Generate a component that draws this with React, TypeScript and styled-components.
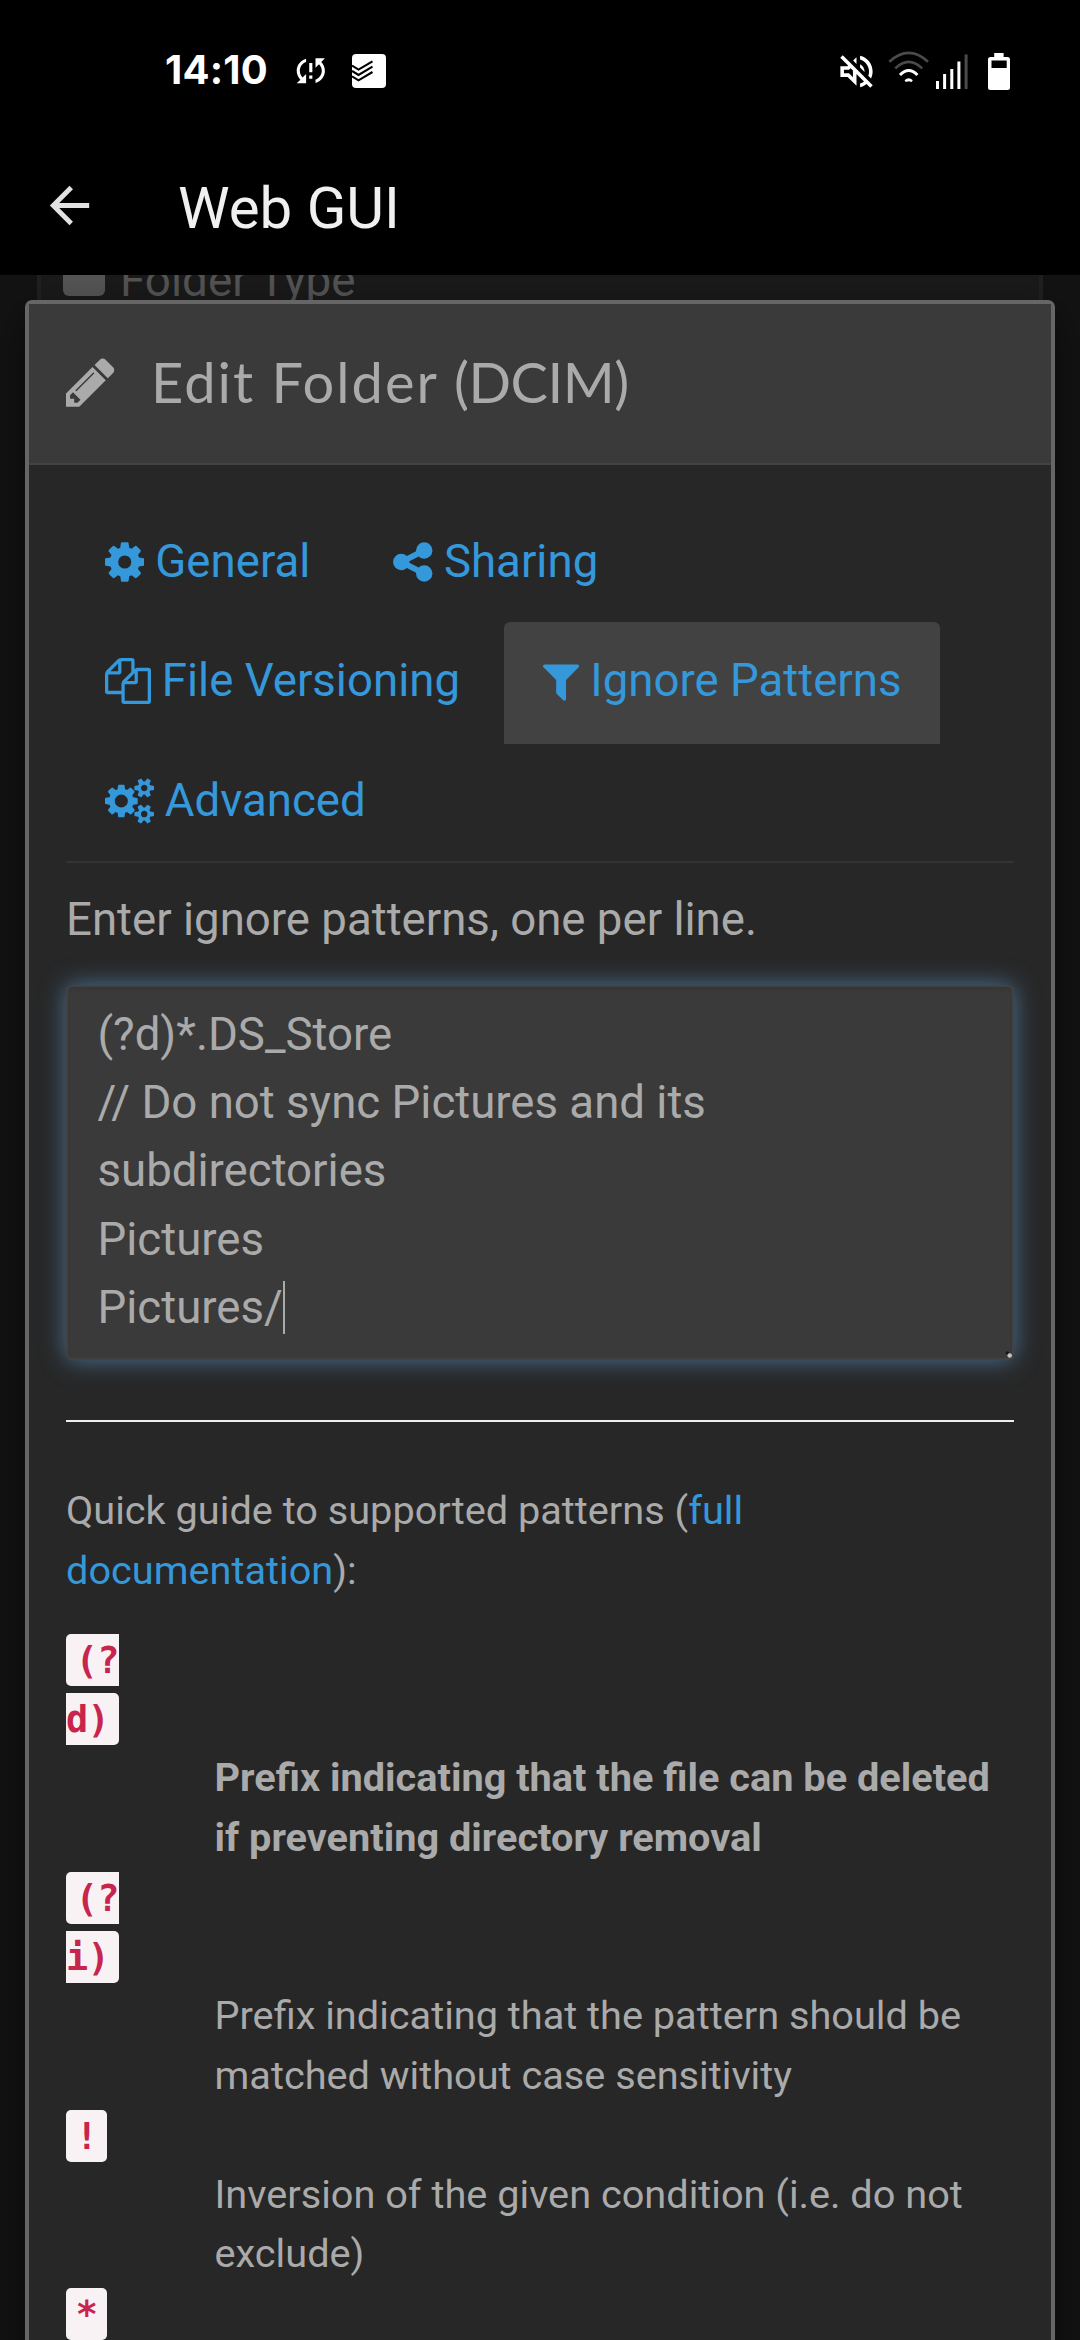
import React from 'react';
import styled, { createGlobalStyle, css } from 'styled-components';

const GlobalStyle = createGlobalStyle`
  *, *::before, *::after { box-sizing: border-box; }
  html, body { margin: 0; padding: 0; background: #000; }
  body { width: 1080px; height: 2340px; overflow: hidden; font-family: Roboto, sans-serif; }
`;

const Screen = styled.div`
  display: flex;
  flex-direction: column;
  width: 1080px;
  height: 2340px;
  overflow: hidden;
  background: #000;
  color: #aaa;
  font-family: Roboto, sans-serif;
`;

/* ---------- status bar ---------- */

const StatusBar = styled.div`
  display: flex;
  align-items: center;
  flex: none;
  height: 142px;
  padding: 0 70px 0 165px;
  color: #fff;
`;

const Clock = styled.span`
  width: 127px;
  padding-bottom: 2px;
  font: 700 40px/48px Inter, sans-serif;
  letter-spacing: 0.2px;
  white-space: nowrap;
`;

const StatusGroup = styled.div<{ $end?: boolean }>`
  display: flex;
  align-items: center;
  ${(p) => p.$end && css`margin-left: auto;`}
`;

const Glyph = styled.svg<{ $w: number; $h?: number; $gap?: number }>`
  display: block;
  flex: none;
  width: ${(p) => p.$w}px;
  height: ${(p) => p.$h ?? p.$w}px;
  margin-left: ${(p) => p.$gap ?? 0}px;
  fill: currentColor;
`;

const WifiGlyph = styled(Glyph)`
  margin-bottom: 1px;
`;

/* ---------- app bar ---------- */

const AppBar = styled.header`
  display: flex;
  align-items: center;
  flex: none;
  height: 133px;
  padding: 0 40px 7px;
`;

const BackIcon = styled(Glyph)`
  color: #e2e2e2;
`;

const AppTitle = styled.h1`
  margin: 0 0 0 79px;
  padding-top: 6px;
  font-weight: 400;
  font-size: 58.2px;
  line-height: 66px;
  color: #f0f0f0;
  white-space: nowrap;
`;

/* ---------- web view ---------- */

const WebView = styled.main`
  position: relative;
  flex: 1;
  overflow: hidden;
  background: #131313;
`;

const Underlay = styled.div`
  position: absolute;
  inset: 0 37px;
  overflow: hidden;
  border: solid #202020;
  border-width: 0 4px;
  background: #1a1a1a;
`;

const UnderlayRow = styled.div`
  display: flex;
  align-items: center;
  height: 68px;
  margin-top: -28px;
  padding-left: 22px;
  color: #545454;
  font-size: 45.8px;
  line-height: 68px;
  white-space: nowrap;
`;

const FolderBlock = styled.span`
  width: 42px;
  height: 36px;
  margin: -6px 15px 0 0;
  border-radius: 6px;
  background: #555;
`;

const Modal = styled.section`
  position: relative;
  height: 2100px;
  margin: 25px 25px 0;
  border: 4px solid #666;
  border-radius: 7px;
  background: #272727;
  box-shadow: 0 14px 42px rgba(0, 0, 0, 0.5);
`;

const ModalHeader = styled.div`
  display: flex;
  align-items: center;
  height: 161px;
  padding: 0 37px;
  border-bottom: 2px solid #434343;
  background: #3a3a3a;
`;

const ModalTitle = styled.h2`
  margin: 0 0 0 32px;
  padding-bottom: 4px;
  font: 400 56px/68px Lato, sans-serif;
  letter-spacing: 2px;
  color: #aaa;
  white-space: nowrap;
`;

const FolderName = styled.span`
  letter-spacing: -0.5px;
`;

const ModalBody = styled.div`
  padding: 37px 37px 0;
`;

const Tabs = styled.nav`
  display: flex;
  flex-wrap: wrap;
  column-gap: 5.5px;
  height: 361px;
  align-content: flex-start;
  border-bottom: 2px solid #333;
`;

const Tab = styled.a<{ $active?: boolean }>`
  display: flex;
  align-items: center;
  height: 122px;
  margin-bottom: -2.3px;
  padding: 0 38.8px 2.6px;
  border-radius: 6px 6px 0 0;
  background: ${(p) => (p.$active ? '#424242' : 'transparent')};
  color: #3498db;
  font-size: 45.6px;
  line-height: 68px;
  white-space: nowrap;
`;

const TabIcon = styled(Glyph)`
  margin-right: 11px;
`;

const Lead = styled.p`
  margin: 23px 0 0;
  font-size: 45.6px;
  line-height: 68px;
`;

const PatternBox = styled.div`
  position: relative;
  height: 375px;
  margin-top: 31px;
  padding: 14px 29.5px;
  border: 2px solid #424242;
  border-radius: 6px;
  background: #3a3a3a;
  box-shadow: inset 0 3px 3px rgba(0, 0, 0, 0.075), 0 0 24px rgba(94, 156, 208, 0.66);
  font-size: 45.6px;
  line-height: 68.2px;
`;

const PatternLine = styled.div`
  display: flex;
  align-items: center;
  height: 68.2px;
  white-space: nowrap;
`;

const Caret = styled.span`
  width: 2px;
  height: 53px;
  background: #aaa;
`;

const Grip = styled(Glyph)`
  position: absolute;
  right: -1px;
  bottom: -1px;
`;

const Divider = styled.hr`
  height: 2px;
  margin: 60px 0 59px;
  border: 0;
  background: #ecf0f1;
`;

const Guide = styled.p`
  margin: 0 0 29.4px;
  font-size: 39.7px;
  line-height: 59.5px;
`;

const DocLink = styled.a`
  color: #3498db;
`;

const PatternList = styled.dl`
  margin: 0;
  font-size: 39.7px;
  line-height: 59.5px;
`;

const Term = styled.dt`
  width: 60px;
`;

const Code = styled.code`
  padding: 4.5px 9.7px;
  border-radius: 5px;
  background: #f9f2f4;
  color: #c7254e;
  font-family: 'DejaVu Sans Mono', monospace;
  font-size: 36.8px;
  font-weight: 700;
  line-height: 1;
  letter-spacing: -0.6px;
`;

const Meaning = styled.dd<{ $strong?: boolean }>`
  margin: 0 0 0 148.5px;
  font-weight: ${(p) => (p.$strong ? 700 : 400)};
  white-space: nowrap;
`;

const icons = {
  pencil:
    'M491 1536l91-91-235-235-91 91v107h128v128h107zm523-928q0-22-22-22-10 0-17 7l-542 542q-7 7-7 17 0 22 22 22 10 0 17-7l542-542q7-7 7-17zm-54-192l416 416-832 832h-416v-416zm683 96q0 53-37 90l-166 166-416-416 166-165q36-38 90-38 53 0 91 38l235 234q37 39 37 91z',
  cog:
    'M1152 896q0-106-75-181t-181-75-181 75-75 181 75 181 181 75 181-75 75-181zm512-109v222q0 12-8 23t-20 13l-185 28q-19 54-39 91 35 50 107 138 10 12 10 25t-9 23q-27 37-99 108t-94 71q-12 0-26-9l-138-108q-44 23-91 38-16 136-29 186-7 28-36 28h-222q-14 0-24.5-8.5t-11.5-21.5l-28-184q-49-16-90-37l-141 107q-10 9-25 9-14 0-25-11-126-114-165-168-7-10-7-23 0-12 8-23 15-21 51-66.5t54-70.5q-27-50-41-99l-183-27q-13-2-21-12.5t-8-23.5v-222q0-12 8-23t19-13l186-28q14-46 39-92-40-57-107-138-10-12-10-24 0-10 9-23 26-36 98.5-107.5t94.5-71.5q13 0 26 10l138 107q44-23 91-38 16-136 29-186 7-28 36-28h222q14 0 24.5 8.5t11.5 21.5l28 184q49 16 90 37l142-107q9-9 24-9 13 0 25 10 129 119 165 170 7 8 7 22 0 12-8 23-15 21-51 66.5t-54 70.5q26 50 41 98l183 28q13 2 21 12.5t8 23.5z',
  share:
    'M1344 1024q133 0 226.5 93.5t93.5 226.5-93.5 226.5-226.5 93.5-226.5-93.5-93.5-226.5q0-12 2-34l-360-180q-92 86-218 86-133 0-226.5-93.5t-93.5-226.5 93.5-226.5 226.5-93.5q126 0 218 86l360-180q-2-22-2-34 0-133 93.5-226.5t226.5-93.5 226.5 93.5 93.5 226.5-93.5 226.5-226.5 93.5q-126 0-218-86l-360 180q2 22 2 34t-2 34l360 180q92-86 218-86z',
  files:
    'M1696 384q40 0 68 28t28 68v1216q0 40-28 68t-68 28h-960q-40 0-68-28t-28-68v-288h-544q-40 0-68-28t-28-68v-672q0-40 20-88t48-76l408-408q28-28 76-48t88-20h416q40 0 68 28t28 68v328q68-40 128-40h416zm-544 213l-299 299h299v-299zm-640-384l-299 299h299v-299zm196 647l316-316v-416h-384v416q0 40-28 68t-68 28h-416v640h512v-256q0-40 20-88t48-76zm956 804v-1152h-384v416q0 40-28 68t-68 28h-416v640h896z',
  filter:
    'M1595 295q17 41-14 70l-493 493v742q0 42-39 59-13 5-25 5-27 0-45-19l-256-256q-19-19-19-45v-486l-493-493q-31-29-14-70 17-39 59-39h1280q42 0 59 39z',
  cogs:
    'M832 896q0-106-75-181t-181-75-181 75-75 181 75 181 181 75 181-75 75-181zm768 512q0-52-38-90t-90-38-90 38-38 90q0 53 37.5 90.5t90.5 37.5 90.5-37.5 37.5-90.5zm0-1024q0-52-38-90t-90-38-90 38-38 90q0 53 37.5 90.5t90.5 37.5 90.5-37.5 37.5-90.5zm-384 421v185q0 10-7 19.5t-16 10.5l-155 24q-11 35-32 76 34 48 90 115 7 11 7 20 0 12-7 19-23 30-82.5 89.5t-78.5 59.5q-11 0-21-7l-115-90q-37 19-77 31-11 108-23 155-7 24-30 24h-186q-11 0-20-7.5t-10-17.5l-23-153q-34-10-75-31l-118 89q-7 7-20 7-11 0-21-8-144-133-144-160 0-9 7-19 10-14 41-53t47-61q-23-44-35-82l-152-24q-10-1-17-9.5t-7-19.5v-185q0-10 7-19.5t16-10.5l155-24q11-35 32-76-34-48-90-115-7-11-7-20 0-12 7-20 22-30 82-89t79-59q11 0 21 7l115 90q34-18 77-32 11-108 23-154 7-24 30-24h186q11 0 20 7.5t10 17.5l23 153q34 10 75 31l118-89q8-7 20-7 11 0 21 8 144 133 144 160 0 8-7 19-12 16-42 54t-45 60q23 48 34 82l152 23q10 2 17 10.5t7 19.5zm640 533v140q0 16-149 31-12 27-30 52 51 113 51 138 0 4-4 7-122 71-124 71-8 0-46-47t-52-68q-20 2-30 2t-30-2q-14 21-52 68t-46 47q-2 0-124-71-4-3-4-7 0-25 51-138-18-25-30-52-149-15-149-31v-140q0-16 149-31 13-29 30-52-51-113-51-138 0-4 4-7 4-2 35-20t59-34 30-16q8 0 46 46.5t52 67.5q20-2 30-2t30 2q51-71 92-112l6-2q4 0 124 70 4 3 4 7 0 25-51 138 17 23 30 52 149 15 149 31zm0-1024v140q0 16-149 31-12 27-30 52 51 113 51 138 0 4-4 7-122 71-124 71-8 0-46-47t-52-68q-20 2-30 2t-30-2q-14 21-52 68t-46 47q-2 0-124-71-4-3-4-7 0-25 51-138-18-25-30-52-149-15-149-31v-140q0-16 149-31 13-29 30-52-51-113-51-138 0-4 4-7 4-2 35-20t59-34 30-16q8 0 46 46.5t52 67.5q20-2 30-2t30 2q51-71 92-112l6-2q4 0 124 70 4 3 4 7 0 25-51 138 17 23 30 52 149 15 149 31z',
  syncProblem:
    'M3 12c0 2.21.91 4.2 2.36 5.64L3 20h6v-6l-2.24 2.24C5.68 15.15 5 13.66 5 12c0-2.61 1.67-4.83 4-5.65V4.26C5.55 5.15 3 8.27 3 12zm8 5h2v-2h-2v2zM21 4h-6v6l2.24-2.24C18.32 8.85 19 10.34 19 12c0 2.61-1.67 4.83-4 5.65v2.09c3.45-.89 6-4.01 6-7.74 0-2.21-.91-4.2-2.36-5.64L21 4zm-10 9h2V7h-2v6z',
  volumeOff:
    'M4.34 2.93L2.93 4.34 7.29 8.7 7 9H3v6h4l5 5v-6.59l4.18 4.18c-.65.49-1.38.88-2.18 1.11v2.06c1.34-.3 2.57-.92 3.61-1.75l2.05 2.05 1.41-1.41L4.34 2.93zM10 15.17L7.83 13H5v-2h2.83l.88-.88L10 11.41v3.76zM19 12c0 .82-.15 1.61-.41 2.34l1.53 1.53c.56-1.17.88-2.48.88-3.87 0-4.28-2.99-7.86-7-8.77v2.06c2.89.86 5 3.54 5 6.71zm-7-8l-1.88 1.88L12 7.76zm4.5 8c0-1.77-1.02-3.29-2.5-4.03v1.79l2.48 2.48c.01-.08.02-.16.02-.24z',
  arrowBack: 'M20 11H7.83l5.59-5.59L12 4l-8 8 8 8 1.41-1.41L7.83 13H20v-2z',
};

const tabs = [
  { label: 'General', path: icons.cog, width: 39.5, box: '128 0 1536 1792' },
  { label: 'Sharing', path: icons.share, width: 39.5, box: '128 0 1536 1792' },
  { label: 'File Versioning', path: icons.files, width: 46, box: '0 0 1792 1792' },
  { label: 'Ignore Patterns', path: icons.filter, width: 36.2, box: '192 0 1408 1792', active: true },
  { label: 'Advanced', path: icons.cogs, width: 49, box: '-64 0 1920 1792' },
];

const patternText = [
  '(?d)*.DS_Store',
  '// Do not sync Pictures and its',
  'subdirectories',
  'Pictures',
  'Pictures/',
];

const guide = [
  {
    code: '(?d)',
    strong: true,
    lines: ['Prefix indicating that the file can be deleted', 'if preventing directory removal'],
  },
  {
    code: '(?i)',
    lines: ['Prefix indicating that the pattern should be', 'matched without case sensitivity'],
  },
  { code: '!', lines: ['Inversion of the given condition (i.e. do not', 'exclude)'] },
  { code: '*', lines: [] },
];

function SystemStatus() {
  return (
    <StatusBar>
      <Clock>14:10</Clock>
      <StatusGroup>
        <Glyph $w={37.6} viewBox="0 0 24 24">
          <path d={icons.syncProblem} />
        </Glyph>
        <Glyph $w={34} $gap={22} viewBox="0 0 34 34">
          <rect width="34" height="34" rx="4" />
          <path
            d="M0 11.6L6.5 15.6 20.5 7.3M0 16.9L6.5 20.9 20.5 12.6M0 22.3L6.5 26.3 20.5 18"
            fill="none"
            stroke="#000"
            strokeWidth="2.1"
          />
        </Glyph>
      </StatusGroup>
      <StatusGroup $end>
        <Glyph $w={43} viewBox="0 0 24 24">
          <path d={icons.volumeOff} />
        </Glyph>
        <WifiGlyph $w={42} $h={42} $gap={10} viewBox="0 0 42 42">
          <g fill="none" strokeWidth="2.6">
            <path d="M1.3 11.8Q20.7-6 40 11.8M7.2 18.4Q20.7 5.4 34.2 18.4" stroke="#4a4a4a" />
            <path d="M12 25Q20.7 16.2 29.4 25" stroke="#fff" strokeWidth="3" />
          </g>
          <path d="M16.6 30.2Q20.7 26.4 24.8 30.2L23.6 32 20.7 31.2 17.8 32Z" />
        </WifiGlyph>
        <Glyph $w={32} $h={36} $gap={6} viewBox="0 0 32 36">
          <path d="M0 28h3v8H0zM7.1 21h3v15h-3zM14.3 16h3v20h-3zM21.4 8.5h3V36h-3z" />
          <path d="M28.6 1.5h3V36h-3z" fill="#4a4a4a" />
        </Glyph>
        <Glyph $w={22} $h={37} $gap={20} viewBox="0 0 22 37">
          <path
            fillRule="evenodd"
            d="M6.2 0h9.4v4h3.9A2.5 2.5 0 0 1 22 6.5v28a2.5 2.5 0 0 1-2.5 2.5h-17A2.5 2.5 0 0 1 0 34.5v-28A2.5 2.5 0 0 1 2.5 4h3.7zM3.5 7.5v7.5h15.2V7.5z"
          />
        </Glyph>
      </StatusGroup>
    </StatusBar>
  );
}

export default function App() {
  return (
    <Screen>
      <GlobalStyle />
      <SystemStatus />
      <AppBar>
        <BackIcon $w={59} viewBox="0 0 24 24">
          <path d={icons.arrowBack} />
        </BackIcon>
        <AppTitle>Web GUI</AppTitle>
      </AppBar>
      <WebView>
        <Underlay>
          <UnderlayRow>
            <FolderBlock />
            Folder Type
          </UnderlayRow>
        </Underlay>
        <Modal>
          <ModalHeader>
            <Glyph $w={53} $h={53} viewBox="128 100 1664 1664">
              <path d={icons.pencil} />
            </Glyph>
            <ModalTitle>
              Edit Folder <FolderName>(DCIM)</FolderName>
            </ModalTitle>
          </ModalHeader>
          <ModalBody>
            <Tabs>
              {tabs.map((tab) => (
                <Tab key={tab.label} $active={tab.active}>
                  <TabIcon $w={tab.width} $h={46} viewBox={tab.box}>
                    <path d={tab.path} />
                  </TabIcon>
                  {tab.label}
                </Tab>
              ))}
            </Tabs>
            <Lead>Enter ignore patterns, one per line.</Lead>
            <PatternBox>
              {patternText.map((line, i) => (
                <PatternLine key={line}>
                  {line}
                  {i === patternText.length - 1 && <Caret />}
                </PatternLine>
              ))}
              <Grip $w={8} viewBox="0 0 8 8">
                <circle cx="2.5" cy="2" r="1.8" fill="#151515" />
                <circle cx="4.7" cy="4.5" r="2.3" fill="#c4c4c4" />
              </Grip>
            </PatternBox>
            <Divider />
            <Guide>
              Quick guide to supported patterns (
              <DocLink>
                full
                <br />
                documentation
              </DocLink>
              ):
            </Guide>
            <PatternList>
              {guide.map((item) => (
                <React.Fragment key={item.code}>
                  <Term>
                    <Code>{item.code}</Code>
                  </Term>
                  <Meaning $strong={item.strong}>
                    {item.lines.map((line) => (
                      <div key={line}>{line}</div>
                    ))}
                  </Meaning>
                </React.Fragment>
              ))}
            </PatternList>
          </ModalBody>
        </Modal>
      </WebView>
    </Screen>
  );
}
